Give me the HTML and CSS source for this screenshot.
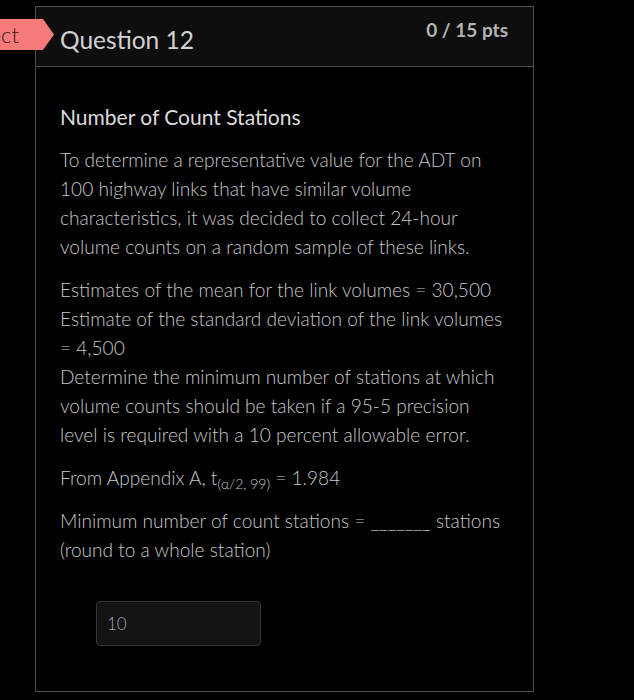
FILE: index.html
```html
<!DOCTYPE html>
<html lang="en">
<head>
<meta charset="utf-8">
<title>Question 12</title>
<link rel="stylesheet" href="styles.css">
</head>
<body>
<div class="page">
  <div class="status-badge"><span>Incorrect</span></div>
  <div class="card">
    <div class="card-header">
      <h2 class="q-title">Question 12</h2>
      <div class="q-pts">0 / 15 pts</div>
    </div>
    <div class="card-body">
      <h3 class="q-heading">Number of Count Stations</h3>
      <p>To determine a representative value for the ADT on 100 highway links that have similar volume characteristics, it was decided to collect 24-hour volume counts on a random sample of these links.</p>
      <p>Estimates of the mean for the link volumes = 30,500<br>Estimate of the standard deviation of the link volumes = 4,500<br>Determine the minimum number of stations at which volume counts should be taken if a 95-5 precision level is required with a 10 percent allowable error.</p>
      <p>From Appendix A, t<sub>(α/2, 99)</sub> = 1.984</p>
      <p>Minimum number of count stations = _______ stations (round to a whole station)</p>
      <div class="answer">
        <div class="answer-box">10</div>
      </div>
    </div>
  </div>
</div>
</body>
</html>
```
FILE: styles.css
```css
html, body {
  margin: 0;
  padding: 0;
  background: #000;
}
body {
  font-family: Lato, "Noto Sans", sans-serif;
  color: #c8c8c8;
  width: 634px;
  height: 700px;
  overflow: hidden;
}
.page {
  position: relative;
  padding: 6px 0 0 35px;
}
.status-badge {
  position: absolute;
  left: 0;
  top: 19px;
  width: 54px;
  height: 31px;
  overflow: hidden;
}
.status-badge span {
  position: absolute;
  right: 0;
  top: 0;
  height: 31px;
  padding: 0 35px 0 20px;
  background: #f67a7a;
  color: #3b1515;
  font-size: 22px;
  font-weight: 300;
  line-height: 31px;
  white-space: nowrap;
  clip-path: polygon(0 0, calc(100% - 11px) 0, 100% 50%, calc(100% - 11px) 100%, 0 100%);
}
.card {
  width: 497px;
  height: 684px;
  border: 1px solid #4d4d4d;
  box-sizing: content-box;
}
.card-header {
  height: 59px;
  background: #0e0e0e;
  border-bottom: 1px solid #4d4d4d;
  display: flex;
  justify-content: space-between;
  align-items: flex-start;
  padding: 0 25px 0 24px;
}
.q-title {
  margin: 0;
  padding-top: 20px;
  font-size: 24.5px;
  line-height: 26px;
  font-weight: 400;
  color: #d2d2d2;
}
.q-pts {
  padding-top: 13px;
  font-size: 19px;
  line-height: 20px;
  font-weight: 700;
  color: #b4b4b4;
}
.card-body {
  padding: 36px 24px 0 24px;
}
.q-heading {
  margin: 0 0 14px 0;
  font-size: 21px;
  line-height: 28px;
  font-weight: 400;
  color: #dcdcdc;
}
.card-body p {
  margin: 0 0 14px 0;
  font-size: 19.1px;
  line-height: 29px;
  font-weight: 300;
  width: 452px;
}
.card-body sub {
  font-size: 14px;
  line-height: 0;
  vertical-align: -4px;
}
.answer {
  padding: 23px 0 0 36px;
}
.answer-box {
  width: 163px;
  height: 43px;
  background: #131313;
  border: 1px solid #353535;
  border-radius: 4px;
  box-sizing: content-box;
  padding: 0;
  font-size: 17px;
  font-weight: 300;
  line-height: 43px;
  color: #a6a6a6;
  text-indent: 10px;
}
```
